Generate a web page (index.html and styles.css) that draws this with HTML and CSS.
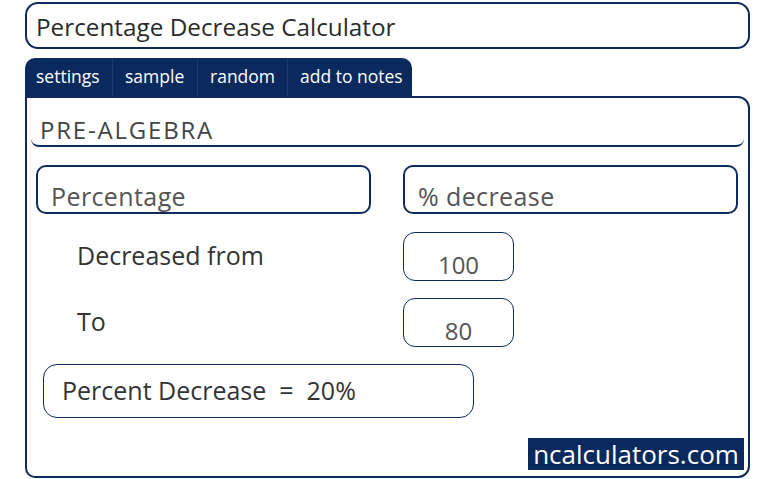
FILE: index.html
```html
<!DOCTYPE html>
<html>
<head>
<meta charset="utf-8">
<link rel="stylesheet" href="styles.css">
</head>
<body>
<div class="page">
  <div class="title">Percentage Decrease Calculator</div>
  <div class="tabs">
    <span class="tab">settings</span>
    <span class="tab">sample</span>
    <span class="tab">random</span>
    <span class="tab">add to notes</span>
  </div>
  <div class="panel">
    <div class="heading">PRE-ALGEBRA</div>
    <div class="selects">
      <div class="select">Percentage</div>
      <div class="select">% decrease</div>
    </div>
    <div class="row">
      <div class="label">Decreased from</div>
      <div class="input">100</div>
    </div>
    <div class="row">
      <div class="label">To</div>
      <div class="input">80</div>
    </div>
    <div class="result">Percent Decrease &nbsp;=&nbsp; 20%</div>
    <div class="footer">
      <span class="brand">ncalculators.com</span>
    </div>
  </div>
</div>
</body>
</html>
```
FILE: styles.css
```css
* { box-sizing: border-box; }
html, body { margin: 0; padding: 0; background: #fff; }
body {
  font-family: "Open Sans", "DejaVu Sans", sans-serif;
  color: #333;
}
.page {
  width: 770px;
  height: 479px;
  padding: 2px 20px 0 25px;
  display: flex;
  flex-direction: column;
}
.title {
  height: 47px;
  border: 2px solid #0f2b5c;
  border-radius: 13px;
  font-size: 24.3px;
  line-height: 46px;
  padding-left: 9px;
  color: #2b2b2b;
}
.tabs {
  margin-top: 9px;
  width: 387px;
  height: 38px;
  background: #0a2a5e;
  border-radius: 10px 10px 0 0;
  display: flex;
}
.tab {
  color: #fff;
  font-size: 17.5px;
  line-height: 37px;
  border-right: 1px solid #1c3a6c;
}
.tab:first-child { padding-left: 11px; width: 88px; }
.tab:nth-child(2) { width: 85px; padding-left: 12px; }
.tab:nth-child(3) { width: 90px; padding-left: 12px; }
.tab:last-child { border-right: none; padding-left: 12px; }
.panel {
  flex: 1;
  border: 2px solid #0f2b5c;
  border-radius: 0 12px 12px 10px;
  margin-bottom: 1px;
  padding: 0 4px 0 2px;
  display: flex;
  flex-direction: column;
}
.heading {
  height: 49px;
  font-size: 24px;
  letter-spacing: 1.8px;
  color: #444;
  padding: 18px 0 0 9px;
  border-bottom: 2px solid #0f2b5c;
  border-radius: 0 0 8px 8px;
  line-height: 28px;
  margin-left: 2px;
}
.selects {
  display: flex;
  gap: 32px;
  margin-top: 18px;
  padding-left: 7px;
}
.select {
  width: 335px;
  height: 49px;
  border: 2.5px solid #0f2b5c;
  border-radius: 10px;
  font-size: 25px;
  letter-spacing: 0.4px;
  color: #555;
  padding: 15px 0 0 13px;
  line-height: 28px;
}
.row {
  display: flex;
  align-items: center;
  margin-top: 18px;
  height: 49px;
}
.row + .row { margin-top: 17px; }
.label {
  width: 374px;
  padding-left: 48px;
  font-size: 25px;
  color: #333;
  margin-top: -3px;
}
.input {
  width: 111px;
  height: 49px;
  border: 1.5px solid #0f2b5c;
  border-radius: 12px;
  text-align: center;
  font-size: 24px;
  color: #555;
  padding-top: 18px;
  line-height: 28px;
}
.result {
  margin: 17px 0 0 14px;
  width: 431px;
  height: 54px;
  border: 1.5px solid #0f2b5c;
  border-radius: 14px;
  font-size: 25px;
  color: #333;
  line-height: 50px;
  padding-left: 18px;
}
.footer {
  margin-top: auto;
  display: flex;
  justify-content: flex-end;
  padding-bottom: 6px;
}
.brand {
  background: #0a2a5e;
  color: #fff;
  font-size: 26px;
  line-height: 32px;
  width: 216px;
  text-align: center;
}
```
